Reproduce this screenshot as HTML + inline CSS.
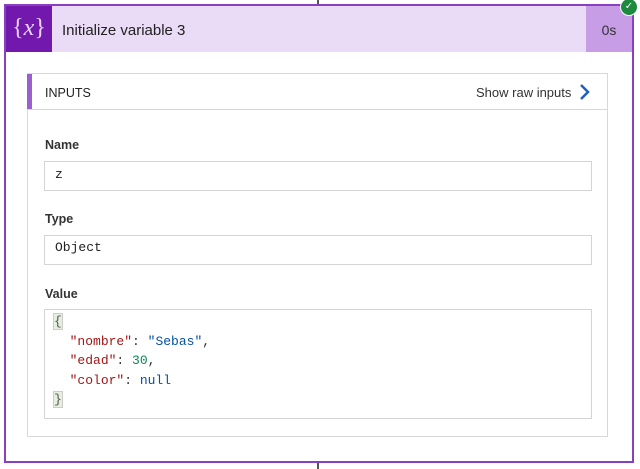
<!DOCTYPE html>
<html><head><style>
body{margin:0;width:640px;height:469px;background:#fff;position:relative;overflow:hidden;font-family:"Liberation Sans",sans-serif;}
.a{position:absolute;}
.lbl{font-size:12.5px;font-weight:bold;color:#333;}
.inp{border:1px solid #d4d4d4;background:#fff;font-family:"Liberation Mono",monospace;font-size:13px;color:#222;box-sizing:border-box;}
.m{font-family:"Liberation Mono",monospace;font-size:13px;}
</style></head><body>
<div class="a" style="left:317px;top:0;width:2px;height:6px;background:#555"></div>
<div class="a" style="left:317px;top:461px;width:2px;height:8px;background:#555"></div>
<div class="a" style="left:4px;top:4px;width:626px;height:455px;border:2px solid #8a3fc0;border-top-width:2px;"></div>
<div class="a" style="left:6px;top:6px;width:626px;height:46px;background:#eadbf6"></div>
<div class="a" style="left:6px;top:6px;width:46px;height:46px;background:#7318ad;color:#e8d4f8;font-family:'Liberation Serif',serif;font-size:24px;line-height:44px;text-align:center"><span>{</span><i>x</i><span>}</span></div>
<div class="a" style="left:62px;top:22px;font-size:15px;color:#222">Initialize variable 3</div>
<div class="a" style="left:586px;top:6px;width:46px;height:46px;background:#c79de6;font-size:14px;color:#333;line-height:48px;text-align:center">0s</div>
<div class="a" style="left:620px;top:-2px;width:16px;height:16px;border-radius:50%;background:#1e8a3e;border:1px solid #fff;color:#fff;font-size:10px;text-align:center;line-height:16px">✓</div>
<div class="a" style="left:27px;top:73px;width:581px;height:364px;border:1px solid #d8d8d8;box-sizing:border-box"></div>
<div class="a" style="left:27px;top:73px;width:581px;height:37px;border-bottom:1px solid #d8d8d8;box-sizing:border-box"></div>
<div class="a" style="left:27px;top:74px;width:5px;height:35px;background:#9b5fd0"></div>
<div class="a" style="left:45px;top:86px;font-size:12.5px;color:#222">INPUTS</div>
<div class="a" style="left:476px;top:85px;font-size:13px;color:#333">Show raw inputs</div>
<svg class="a" style="left:577px;top:83px" width="14" height="18"><path d="M4 2 L11 9 L4 16" stroke="#1f5fc4" stroke-width="2.5" fill="none"/></svg>
<div class="a lbl" style="left:45px;top:138px">Name</div>
<div class="a inp" style="left:44px;top:161px;width:548px;height:30px;padding:5px 10px">z</div>
<div class="a lbl" style="left:45px;top:212px">Type</div>
<div class="a inp" style="left:44px;top:235px;width:548px;height:30px;padding:4px 10px">Object</div>
<div class="a lbl" style="left:45px;top:287px">Value</div>
<div class="a inp" style="left:44px;top:309px;width:548px;height:110px"></div>
<div class="a m" style="left:54px;top:312px;line-height:19.5px;color:#333">
<span style="background:#e6eee0;outline:1px solid #ccc;color:#555">{</span><br>
&nbsp;&nbsp;<span style="color:#a31515">"nombre"</span>: <span style="color:#0451a5">"Sebas"</span>,<br>
&nbsp;&nbsp;<span style="color:#a31515">"edad"</span>: <span style="color:#098658">30</span>,<br>
&nbsp;&nbsp;<span style="color:#a31515">"color"</span>: <span style="color:#0451a5">null</span><br>
<span style="background:#e6eee0;outline:1px solid #ccc;color:#555">}</span>
</div>
</body></html>
